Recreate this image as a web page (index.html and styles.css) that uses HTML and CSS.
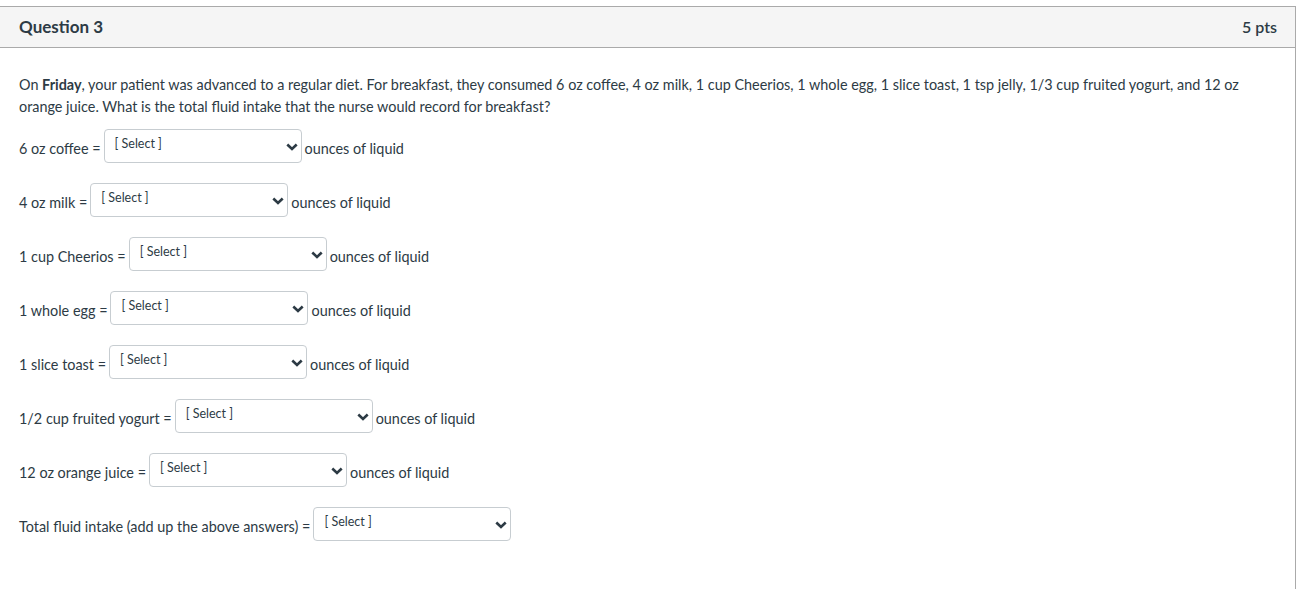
FILE: index.html
```html
<!DOCTYPE html>
<html lang="en">
<head>
  <meta charset="UTF-8" />
  <meta name="viewport" content="width=device-width, initial-scale=1.0" />
  <title>Question 3</title>
  <link rel="stylesheet" href="styles.css">
</head>
<body>
  <div class="question">
    <div class="question-header">
      <span class="question-name">Question 3</span>
      <span class="question-points">5 pts</span>
    </div>

    <div class="question-body">
      <p class="question-text">On <strong>Friday</strong>, your patient was advanced to a regular diet. For breakfast, they consumed 6 oz coffee, 4 oz milk, 1 cup Cheerios, 1 whole egg, 1 slice toast, 1 tsp jelly, 1/3 cup fruited yogurt, and 12 oz orange juice. What is the total fluid intake that the nurse would record for breakfast?</p>

      <div class="answer-row">
        <span class="label">6 oz coffee =</span>
        <select class="blank"><option>[ Select ]</option></select>
        <span class="label">ounces of liquid</span>
      </div>

      <div class="answer-row">
        <span class="label">4 oz milk =</span>
        <select class="blank"><option>[ Select ]</option></select>
        <span class="label">ounces of liquid</span>
      </div>

      <div class="answer-row">
        <span class="label">1 cup Cheerios =</span>
        <select class="blank"><option>[ Select ]</option></select>
        <span class="label">ounces of liquid</span>
      </div>

      <div class="answer-row">
        <span class="label">1 whole egg =</span>
        <select class="blank"><option>[ Select ]</option></select>
        <span class="label">ounces of liquid</span>
      </div>

      <div class="answer-row">
        <span class="label">1 slice toast =</span>
        <select class="blank"><option>[ Select ]</option></select>
        <span class="label">ounces of liquid</span>
      </div>

      <div class="answer-row">
        <span class="label">1/2 cup fruited yogurt =</span>
        <select class="blank"><option>[ Select ]</option></select>
        <span class="label">ounces of liquid</span>
      </div>

      <div class="answer-row">
        <span class="label">12 oz orange juice =</span>
        <select class="blank"><option>[ Select ]</option></select>
        <span class="label">ounces of liquid</span>
      </div>

      <div class="answer-row">
        <span class="label">Total fluid intake (add up the above answers) =</span>
        <select class="blank"><option>[ Select ]</option></select>
      </div>
    </div>
  </div>
</body>
</html>
```

FILE: styles.css
```css
body {
  margin: 0;
  font-family: Lato, 'Helvetica Neue', Arial, sans-serif;
  color: #2d3b45;
  background-color: #ffffff;
}

.question {
  margin: 6px 2px 0 -1px;
  border: 1px solid #aaaaaa;
  border-bottom: none;
  min-height: 600px;
}

.question-header {
  display: flex;
  justify-content: space-between;
  align-items: center;
  box-sizing: border-box;
  height: 41px;
  padding: 0 18px 2px 19px;
  background-color: #f5f5f5;
  border-bottom: 1px solid #aaaaaa;
  font-size: 17px;
  font-weight: bold;
}

.question-points {
  font-size: 16px;
  font-weight: 600;
}

.question-body {
  padding: 26px 18px 0 19px;
  font-size: 14.4px;
  line-height: 22px;
}

.question-text {
  margin: 0 0 11px 0;
}

.question-text strong {
  font-weight: bold;
}

.answer-row {
  display: flex;
  align-items: center;
  gap: 3px;
  margin-bottom: 20px;
}

.label {
  padding-top: 6px;
  white-space: pre;
}

.blank {
  appearance: none;
  -webkit-appearance: none;
  width: 198px;
  height: 34px;
  margin: 0;
  padding: 0 30px 5px 10px;
  border: 1px solid #c7cdd1;
  border-radius: 4px;
  background-color: #ffffff;
  background-image: url("data:image/svg+xml,%3Csvg xmlns='http://www.w3.org/2000/svg' width='12' height='8' viewBox='0 0 12 8'%3E%3Cpath d='M1.3 1.5 L6 6 L10.7 1.5' fill='none' stroke='%232d3b45' stroke-width='2.6'/%3E%3C/svg%3E");
  background-repeat: no-repeat;
  background-position: right 3px top 13px;
  font-family: Lato, 'Helvetica Neue', Arial, sans-serif;
  font-size: 12.5px;
  color: #2d3b45;
}
```
